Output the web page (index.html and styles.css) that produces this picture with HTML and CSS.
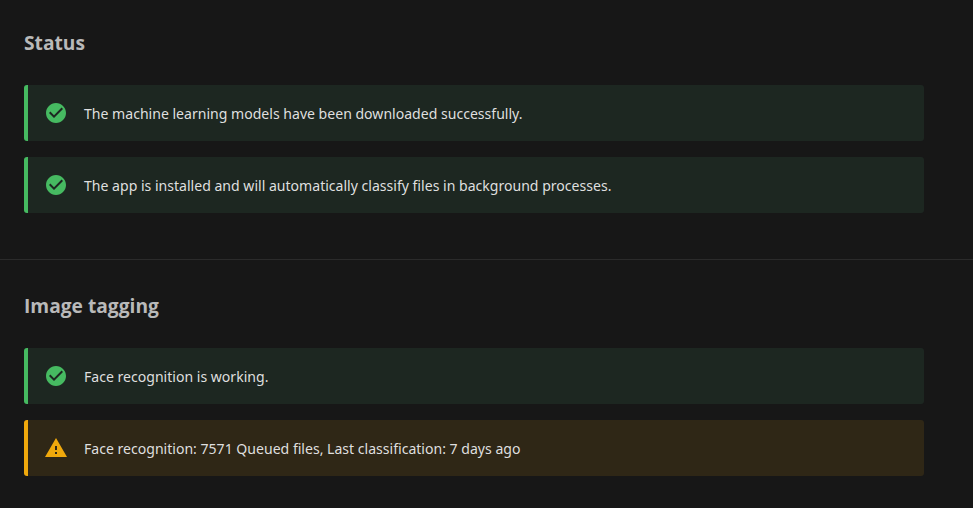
FILE: index.html
```html
<!DOCTYPE html>
<html lang="en">
<head>
<meta charset="utf-8">
<title>Settings</title>
<link rel="stylesheet" href="styles.css">
</head>
<body>
<section class="section">
  <h2 class="heading">Status</h2>
  <div class="note note-success">
    <svg class="icon" viewBox="0 0 24 24"><path fill="#46ba61" d="M12 2C6.5 2 2 6.5 2 12S6.5 22 12 22 22 17.5 22 12 17.5 2 12 2M10 17L5 12L6.41 10.59L10 14.17L17.59 6.58L19 8L10 17Z"/></svg>
    <p>The machine learning models have been downloaded successfully.</p>
  </div>
  <div class="note note-success">
    <svg class="icon" viewBox="0 0 24 24"><path fill="#46ba61" d="M12 2C6.5 2 2 6.5 2 12S6.5 22 12 22 22 17.5 22 12 17.5 2 12 2M10 17L5 12L6.41 10.59L10 14.17L17.59 6.58L19 8L10 17Z"/></svg>
    <p>The app is installed and will automatically classify files in background processes.</p>
  </div>
</section>
<section class="section section-border">
  <h2 class="heading">Image tagging</h2>
  <div class="note note-success">
    <svg class="icon" viewBox="0 0 24 24"><path fill="#46ba61" d="M12 2C6.5 2 2 6.5 2 12S6.5 22 12 22 22 17.5 22 12 17.5 2 12 2M10 17L5 12L6.41 10.59L10 14.17L17.59 6.58L19 8L10 17Z"/></svg>
    <p>Face recognition is working.</p>
  </div>
  <div class="note note-warning">
    <svg class="icon" viewBox="0 0 24 24"><path fill="#f0a90c" d="M13 14H11V10H13M13 18H11V16H13M1 21H23L12 2L1 21Z"/></svg>
    <p>Face recognition: 7571 Queued files, Last classification: 7 days ago</p>
  </div>
</section>
</body>
</html>
```

FILE: styles.css
```css
html, body {
  margin: 0;
  padding: 0;
  height: 100%;
  overflow: hidden;
  background: #171717;
}
body {
  font-family: "Noto Sans", sans-serif;
  font-size: 14.07px;
  color: #dfdfdf;
}
.section {
  padding: 28px 24px 46px;
}
.section-border {
  border-top: 1px solid #2b2b2b;
  padding-top: 31px;
}
.heading {
  margin: 0 0 27px;
  font-family: "Open Sans", sans-serif;
  font-size: 19.2px;
  line-height: 30px;
  font-weight: 700;
  color: #b9b9b9;
}
.note {
  display: flex;
  align-items: center;
  gap: 16px;
  width: 900px;
  height: 56px;
  box-sizing: border-box;
  margin-bottom: 16px;
  padding-left: 16px;
  border-left: 4px solid;
  border-radius: 3px;
}
.note:last-child { margin-bottom: 0; }
.note p { margin: 0; }
.icon { width: 24px; height: 24px; flex: none; }
.note-success { background: #1d2721; border-left-color: #46ba61; }
.note-warning { background: #2f2716; border-left-color: #f0a90c; }
```
